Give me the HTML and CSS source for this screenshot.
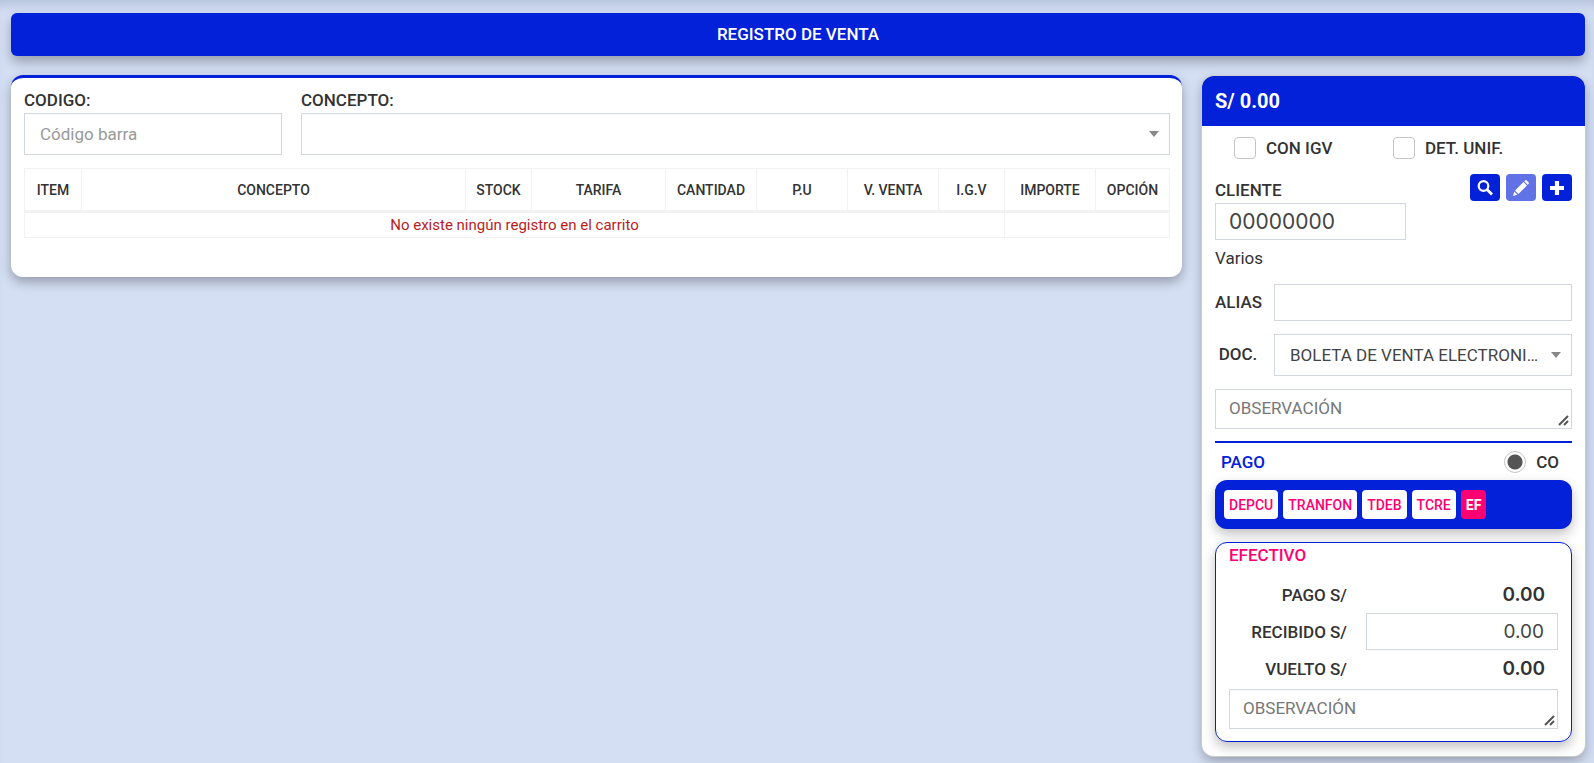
FILE: index.html
```html
<!DOCTYPE html>
<html lang="es">
<head>
  <meta charset="UTF-8" />
  <meta name="viewport" content="width=device-width, initial-scale=1.0" />
  <title>Registro de venta</title>
  <link rel="stylesheet" href="styles.css">
</head>
<body>
  <h1 class="page-title">REGISTRO DE VENTA</h1>

  <main class="layout">
    <section class="card cart">
      <div class="cart-search">
        <div class="field">
          <label for="codigo">CODIGO:</label>
          <input type="text" id="codigo" class="control tall" placeholder="Código barra" />
        </div>
        <div class="field">
          <label for="concepto">CONCEPTO:</label>
          <div class="select">
            <select id="concepto" class="control tall"><option></option></select>
          </div>
        </div>
      </div>

      <table class="items">
        <colgroup>
          <col class="w-item"><col><col class="w-stock"><col class="w-tarifa"><col class="w-num">
          <col class="w-num"><col class="w-num"><col class="w-stock"><col class="w-num"><col class="w-opcion">
        </colgroup>
        <thead>
          <tr>
            <th>ITEM</th>
            <th>CONCEPTO</th>
            <th>STOCK</th>
            <th>TARIFA</th>
            <th>CANTIDAD</th>
            <th>P.U</th>
            <th>V. VENTA</th>
            <th>I.G.V</th>
            <th>IMPORTE</th>
            <th>OPCIÓN</th>
          </tr>
        </thead>
        <tbody>
          <tr>
            <td colspan="8">No existe ningún registro en el carrito</td>
            <td colspan="2"></td>
          </tr>
        </tbody>
      </table>
    </section>

    <aside class="card sale">
      <h2 class="total">S/ 0.00</h2>
      <div class="sale-body">
        <div class="checks">
          <label><input type="checkbox" class="check" />CON IGV</label>
          <label><input type="checkbox" class="check" />DET. UNIF.</label>
        </div>

        <div class="client-head">
          <label for="cliente">CLIENTE</label>
          <div class="actions">
            <button type="button" class="icon-btn" aria-label="Buscar">
              <svg viewBox="0 0 16 16"><circle cx="6.5" cy="6" r="4.8" fill="none" stroke="currentColor" stroke-width="2.2"/><path d="M10 9.5l5 5" stroke="currentColor" stroke-width="2.8"/></svg>
            </button>
            <button type="button" class="icon-btn" aria-label="Editar" disabled>
              <svg viewBox="0 0 16 16"><path fill="currentColor" d="M0 16l1.200-4.400 3.200 3.200zM2 10.600l8.500-8.500 3.400 3.400-8.500 8.500zM11.300 1.300l.8-.8q.8-.8 1.600 0l1.800 1.800q.8.8 0 1.600l-.8.8z"/></svg>
            </button>
            <button type="button" class="icon-btn" aria-label="Agregar">
              <svg viewBox="0 0 16 16"><path d="M8 1v14M1 8h14" stroke="currentColor" stroke-width="4.200"/></svg>
            </button>
          </div>
        </div>
        <input type="text" id="cliente" class="control number client-doc" value="00000000" />
        <p class="client-name">Varios</p>

        <div class="row">
          <label for="alias">ALIAS</label>
          <input type="text" id="alias" class="control" />
        </div>
        <div class="row">
          <label for="doc">DOC.</label>
          <div class="select">
            <select id="doc" class="control tall"><option>BOLETA DE VENTA ELECTRONICA</option></select>
          </div>
        </div>
        <textarea class="control notes" placeholder="OBSERVACIÓN" aria-label="Observación"></textarea>

        <div class="pay-head">
          <h3>PAGO</h3>
          <label><input type="radio" class="radio" name="condicion" checked />CO</label>
        </div>
        <div class="methods">
          <button type="button" class="method">DEPCU</button>
          <button type="button" class="method">TRANFON</button>
          <button type="button" class="method">TDEB</button>
          <button type="button" class="method">TCRE</button>
          <button type="button" class="method active">EF</button>
        </div>

        <div class="cash">
          <h3>EFECTIVO</h3>
          <div class="cash-row">
            <span>PAGO S/</span>
            <output class="number amount">0.00</output>
          </div>
          <div class="cash-row">
            <label for="recibido">RECIBIDO S/</label>
            <input type="text" id="recibido" class="control number" value="0.00" />
          </div>
          <div class="cash-row">
            <span>VUELTO S/</span>
            <output class="number amount">0.00</output>
          </div>
          <textarea class="control notes" placeholder="OBSERVACIÓN" aria-label="Observación del pago"></textarea>
        </div>
      </div>
    </aside>
  </main>
</body>
</html>
```
FILE: styles.css
```css
* { box-sizing: border-box; }
body { margin: 0; min-height: 100vh; padding: 13px 9px 7px 11px; background: #d4dff4;
  box-shadow: inset 0 12px 12px -8px rgba(60,70,120,0.22);
  font: 500 17px/24px Roboto, "Liberation Sans", sans-serif; color: #333; }
h1, h2, h3, p { margin: 0; font-size: 17px; font-weight: 500; }
input, select, textarea, button { font: inherit; margin: 0; }

.page-title { padding: 10px; line-height: 23px; text-align: center; color: #fff;
  background: #0221d9; border-radius: 6px; box-shadow: 0 6px 12px rgba(0,0,0,0.28); }
.layout { display: grid; grid-template-columns: minmax(0, 1fr) 383px; gap: 20px;
  align-items: start; margin-top: 19px; }
.card { background: #fff; border-radius: 12px; box-shadow: 0 5px 12px rgba(0,0,0,0.3); }

.control { display: block; width: 100%; height: 37px; padding: 0 13px; border: 1px solid #d2d6de;
  border-radius: 0; background: #fff; color: #444; font-weight: 400; outline: none; }
.control::placeholder { color: #777; opacity: 1; }
.control.tall { height: 42px; padding: 0 15px; }
#codigo::placeholder { color: #999; }
.number { font-family: Inter, sans-serif; font-size: 19px; }
.notes { height: 40px; padding: 6px 13px; resize: both; overflow: hidden; }
.notes::-webkit-resizer { background: url('data:image/svg+xml,<svg xmlns="http://www.w3.org/2000/svg" width="15" height="15"><path d="M3 12l9-9M8 12l4-4" stroke="%23555" stroke-width="2"/></svg>') no-repeat; }

.select { position: relative; min-width: 0; }
.select .control { appearance: none; padding-right: 27px; overflow: hidden;
  white-space: nowrap; text-overflow: ellipsis; }
.select::after { content: ""; position: absolute; right: 11px; top: 18px; pointer-events: none;
  border: 5px solid transparent; border-top: 6px solid #888; border-bottom: 0; }

/* cart */
.cart { border-top: 3px solid #0221d9; padding: 10px 12px 39px 13px; }
.cart-search { display: grid; grid-template-columns: 258px minmax(0, 1fr); gap: 19px; }
.field label { display: block; margin-bottom: 1px; }
.items { width: 100%; margin-top: 13px; table-layout: fixed; border-collapse: collapse;
  font-size: 15px; }
.items th, .items td { border: 1px solid #f2f2f2; padding: 0; text-align: center; }
.items th { height: 43px; border-bottom-width: 3px; font-size: 14px; font-weight: 500; }
.items td { height: 26px; line-height: 20px; color: #b71c1c; font-weight: 400; }
.w-item { width: 57px; }
.w-stock { width: 66px; }
.w-tarifa { width: 134px; }
.w-num { width: 91px; }
.w-opcion { width: 74px; }

/* sale panel */
.sale { margin-top: 1px; box-shadow: 0 0 0 1px #ccc, 0 5px 12px rgba(0,0,0,0.3); }
.total { padding: 13px; font-size: 20px; font-weight: 700; color: #fff;
  background: #0221d9; border-radius: 12px 12px 0 0; }
.sale-body { padding: 10px 13px 14px; }
.checks { display: grid; grid-template-columns: 159px 1fr; padding-left: 19px; }
.checks label, .pay-head label { display: flex; align-items: center; gap: 10px; }
.check, .radio { appearance: none; width: 22px; height: 22px; border: 1px solid #c4c4c4;
  border-radius: 4px; background: #fff; }
.radio { border-radius: 50%; }
.radio:checked { background: radial-gradient(circle, #555 7px, #fff 8px); }
.client-head { display: flex; justify-content: space-between; height: 43px; padding-top: 14px; }
.client-head label { padding-top: 4px; }
.actions { display: flex; gap: 6px; }
.icon-btn { display: flex; align-items: center; justify-content: center; width: 30px; height: 27px;
  padding: 0; border: 0; border-radius: 4px; background: #0221d9; color: #fff; }
.icon-btn:disabled { background: #6171e6; }
.icon-btn svg { width: 16px; height: 16px; }
.client-doc { width: 191px; font-size: 21px; }
.client-name { margin: 6px 0 14px; font-weight: 400; }
.row { display: grid; grid-template-columns: 46px minmax(0, 1fr); gap: 13px; align-items: center;
  margin-bottom: 13px; }
.row label { padding-bottom: 2px; text-align: center; }
.pay-head { display: flex; justify-content: space-between; align-items: center; height: 39px;
  margin-top: 12px; padding: 0 13px 0 6px; border-top: 2px solid #0221d9; }
.pay-head h3 { color: #0221d9; }
.methods { display: flex; gap: 5px; padding: 10px 9px; border-radius: 12px; background: #0221d9;
  box-shadow: 0 5px 12px rgba(0,0,0,0.25); }
.method { height: 29px; padding: 0 5px; border: 0; border-radius: 4px; background: #fff;
  color: #ff0073; font-size: 14px; }
.method.active { background: #ff0073; color: #fff; font-weight: 700; }
.cash { margin-top: 13px; padding: 0 13px 12px; border: 1px solid #0221d9; border-radius: 12px;
  box-shadow: 0 5px 12px rgba(0,0,0,0.25); }
.cash h3 { margin-bottom: 9px; color: #ff0073; }
.cash-row { display: grid; grid-template-columns: 118px minmax(0, 1fr); gap: 19px;
  min-height: 37px; align-items: center; text-align: right; }
.cash-row .control { text-align: right; }
.amount { padding-right: 13px; font-weight: 600; }
.cash .notes { margin-top: 2px; }
```
